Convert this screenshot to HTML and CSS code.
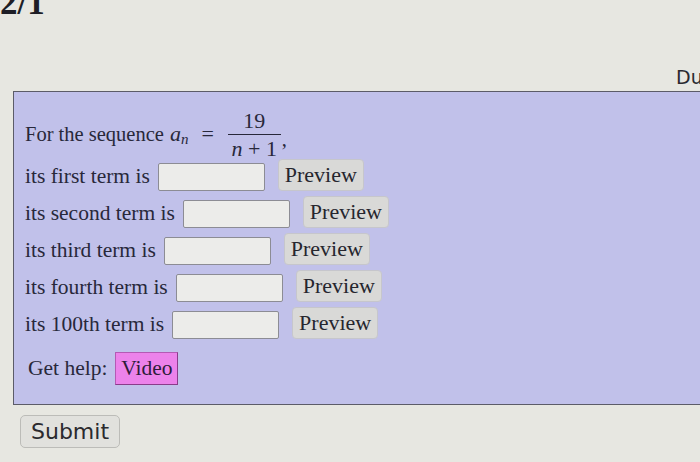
FILE: index.html
```html
<!DOCTYPE html>
<html>
<head>
<meta charset="utf-8">
<link rel="stylesheet" href="styles.css">
</head>
<body>
<div class="header">
  <div class="title">2/1</div>
  <div class="due">Due</div>
</div>
<div class="box">
  <div class="q">
    <span>For the sequence</span>
    <span class="var">a<sub>n</sub></span>
    <span class="eq">=</span>
    <span class="frac"><span class="num">19</span><span class="den"><i>n</i> + 1</span></span>
    <span class="comma">,</span>
  </div>
  <div class="rows">
    <div class="row"><span>its first term is</span><span class="inp"></span><span class="btn">Preview</span></div>
    <div class="row"><span>its second term is</span><span class="inp"></span><span class="btn">Preview</span></div>
    <div class="row"><span>its third term is</span><span class="inp"></span><span class="btn">Preview</span></div>
    <div class="row"><span>its fourth term is</span><span class="inp"></span><span class="btn">Preview</span></div>
    <div class="row"><span>its 100th term is</span><span class="inp"></span><span class="btn">Preview</span></div>
  </div>
  <div class="help"><span>Get help:</span><span class="video">Video</span></div>
</div>
<div class="submit">Submit</div>
</body>
</html>
```
FILE: styles.css
```css
html, body {
  margin: 0;
  padding: 0;
}
body {
  width: 700px;
  height: 462px;
  overflow: hidden;
  background: #e7e7e1;
  font-family: "Liberation Serif", serif;
  color: #28283a;
}
.header {
  height: 91px;
  display: flex;
  flex-direction: column;
}
.title {
  font-size: 35px;
  font-weight: bold;
  line-height: 34px;
  margin-top: -14px;
  margin-left: 0;
  color: #1e1e26;
}
.due {
  margin-top: auto;
  margin-bottom: 3px;
  margin-left: 676px;
  font-family: "DejaVu Sans", sans-serif;
  font-size: 19px;
  line-height: 22px;
  white-space: nowrap;
  color: #2a2a30;
}
.box {
  margin-left: 13px;
  width: 720px;
  height: 314px;
  border: 1px solid #5c5c68;
  border-right: none;
  background: #c1c1ea;
  padding-left: 11px;
  box-sizing: border-box;
  font-size: 21.5px;
}
.q {
  display: flex;
  align-items: center;
  padding-top: 18px;
  height: 48px;
  line-height: 24px;
  font-size: 20.5px;
}
.var {
  font-style: italic;
  margin-left: 6px;
  font-size: 22px;
}
.var sub {
  font-size: 15px;
  vertical-align: -3px;
  line-height: 0;
}
.eq {
  margin-left: 13px;
  margin-right: 14px;
  font-size: 22px;
}
.frac {
  display: flex;
  flex-direction: column;
  align-items: center;
  line-height: 26px;
  font-size: 22px;
}
.num {
  border-bottom: 1.5px solid #28283a;
  width: 100%;
  text-align: center;
  line-height: 27px;
  min-width: 53px;
}
.den {
  line-height: 27px;
  padding: 0 2px;
}
.comma {
  align-self: center;
  margin-top: 10px;
  margin-left: 1px;
}
.rows {
  display: flex;
  flex-direction: column;
}
.row {
  display: flex;
  align-items: center;
  height: 37px;
}
.inp {
  width: 107px;
  height: 28px;
  box-sizing: border-box;
  margin-left: 8px;
  background: #ececea;
  border: 1px solid #8c8c94;
  border-radius: 2px;
}
.btn {
  width: 86px;
  height: 32px;
  margin-left: 13px;
  margin-top: -3px;
  box-sizing: border-box;
  display: flex;
  align-items: center;
  justify-content: center;
  background: #d9d9d7;
  border: 1px solid #c6c6cc;
  border-radius: 4px;
  color: #26262e;
  font-size: 22px;
}
.help {
  display: flex;
  align-items: center;
  height: 37px;
  margin-top: 7px;
  padding-left: 3px;
}
.video {
  margin-left: 8px;
  width: 63px;
  height: 33px;
  box-sizing: border-box;
  display: flex;
  align-items: center;
  justify-content: center;
  background: #ec82ea;
  border: 1px solid #b45ab4;
  border-bottom-color: #8a3c8a;
  border-right-color: #8a3c8a;
  color: #2e1c3a;
}
.submit {
  margin-top: 10px;
  margin-left: 20px;
  width: 100px;
  height: 33px;
  box-sizing: border-box;
  display: flex;
  align-items: center;
  justify-content: center;
  background: #e1e1dd;
  border: 1px solid #bcbcb8;
  border-radius: 5px;
  font-family: "DejaVu Sans", sans-serif;
  font-size: 22px;
  color: #2a2a2e;
}
```
